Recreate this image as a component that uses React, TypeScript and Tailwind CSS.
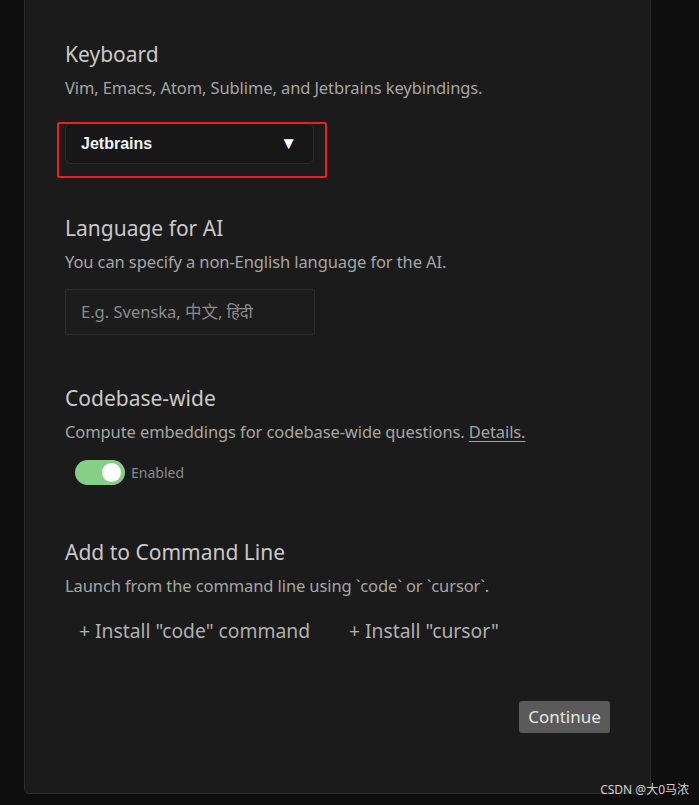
import React from 'react';

const ui = { fontFamily: '"Noto Sans", "Noto Sans CJK SC", sans-serif' };
const arial = { fontFamily: '"Liberation Sans", Arial, sans-serif' };

function Heading({ children }: { children: React.ReactNode }) {
  return <div className="text-[21px] leading-[28px] text-[#c9c9c9]">{children}</div>;
}

function Desc({ children }: { children: React.ReactNode }) {
  return <div className="mt-2 text-[16.5px] leading-[24px] text-[#a6a6a6] tracking-[-0.1px] whitespace-nowrap">{children}</div>;
}

export default function App() {
  return (
    <div className="relative w-[699px] h-[805px] bg-[#0e0e0e] pl-[24px] overflow-hidden" style={ui}>
      <div className="w-[627px] h-[794px] bg-[#1b1b1b] border-x border-b border-[#2d2d2d] rounded-b-[5px] pl-[40px] pr-[40px] pt-[40px]">
        {/* Keyboard */}
        <Heading>Keyboard</Heading>
        <Desc>Vim, Emacs, Atom, Sublime, and Jetbrains keybindings.</Desc>
        <div className="relative mt-[23px] w-[249px]">
          <div className="h-[41px] rounded-[6px] border border-[#2b2b2b] bg-[#171717] flex items-center justify-between pl-[15px] pr-[16px]">
            <span className="text-[16px] font-bold text-[#f2f2f2]" style={arial}>Jetbrains</span>
            <span className="text-[17px] text-white" style={arial}>▼</span>
          </div>
          <div className="absolute left-[-8px] top-[-1px] w-[270px] h-[56px] border-2 border-[#f21d1d] rounded-[2px]" />
        </div>

        {/* Language */}
        <div className="mt-[50px]">
          <Heading>Language for AI</Heading>
          <Desc>You can specify a non-English language for the AI.</Desc>
          <div className="mt-[15px] w-[250px] h-[46px] rounded-[2px] border border-[#2c2c2c] bg-[#1c1c1c] flex items-center pl-[15px] text-[16.5px] text-[#8c8c8c]">
            E.g. Svenska, 中文, हिंदी
          </div>
        </div>

        {/* Codebase */}
        <div className="mt-[49px]">
          <Heading>Codebase-wide</Heading>
          <Desc>
            Compute embeddings for codebase-wide questions.{' '}
            <span className="underline underline-offset-[3px]">Details.</span>
          </Desc>
          <div className="mt-4 ml-[10px] flex items-center gap-[6px]">
            <div className="w-[50px] h-[25px] rounded-full bg-[#86cf86] flex items-center justify-end pr-[4px]">
              <div className="w-[19px] h-[19px] rounded-full bg-white" />
            </div>
            <span className="text-[14px] text-[#8a8a8a]">Enabled</span>
          </div>
        </div>

        {/* Command line */}
        <div className="mt-[53px]">
          <Heading>Add to Command Line</Heading>
          <Desc>Launch from the command line using `code` or `cursor`.</Desc>
          <div className="mt-[21px] ml-[14px] flex items-center text-[19.3px] leading-[24px] text-[#b0b0b0] whitespace-nowrap">
            <span className="w-[270px]">+ Install "code" command</span>
            <span>+ Install "cursor"</span>
          </div>
        </div>

        <div className="mt-[58px] flex justify-end">
          <button className="w-[91px] h-[32px] rounded-[3px] bg-[#5a5a5a] text-[17px] text-[#e6e6e6]">Continue</button>
        </div>
      </div>

      <div className="absolute right-[10px] bottom-[6px] text-[12px] text-[#d0d0d0]">CSDN @大0马浓</div>
    </div>
  );
}
